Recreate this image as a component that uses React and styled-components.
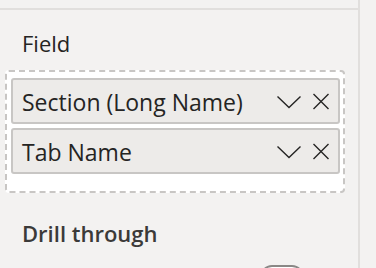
import React from 'react';
import styled, { createGlobalStyle } from 'styled-components';

const GlobalStyle = createGlobalStyle`
  html, body {
    margin: 0;
    padding: 0;
    background: #f3f2f1;
    overflow: hidden;
  }
  body {
    font-family: "Open Sans", "Noto Sans", "Liberation Sans", sans-serif;
    color: #252423;
  }
`;

const Layout = styled.div`
  display: flex;
  width: 376px;
  min-height: 268px;
`;

const Pane = styled.div`
  width: 358px;
  border-right: 2px solid #e1dfdd;
`;

const TopStrip = styled.div`
  height: 8px;
  border-bottom: 2px solid #e1dfdd;
`;

const Heading = styled.div`
  font-size: 22px;
  font-weight: ${(p) => (p.$bold ? 600 : 400)};
  line-height: 30px;
  padding-left: 22px;
  margin-top: ${(p) => p.$top}px;
  color: ${(p) => (p.$bold ? '#3b3a39' : '#252423')};
`;

const DropZone = styled.div`
  margin: 12px 0 0 5px;
  width: 340px;
  box-sizing: border-box;
  border: 2px dashed #c8c6c4;
  border-radius: 4px;
  background: #ffffff;
  padding: 6px 3px 17px 4px;
  display: flex;
  flex-direction: column;
  gap: 4px;
`;

const FieldWell = styled.div`
  height: 46px;
  box-sizing: border-box;
  border: 2px solid #c8c6c4;
  border-radius: 3px;
  background: #edebe9;
  display: flex;
  align-items: center;
  padding: 1px 8px 0 9px;
`;

const FieldName = styled.span`
  flex: 1;
  font-size: 23px;
  white-space: nowrap;
`;

const IconButton = styled.span`
  display: flex;
  align-items: center;
  justify-content: center;
  margin-left: ${(p) => p.$gap || 0}px;
`;

const ToggleRow = styled.div`
  display: flex;
  padding-left: 260px;
  margin-top: 17px;
`;

const Toggle = styled.div`
  width: 40px;
  height: 20px;
  border: 2px solid #8a8886;
  border-radius: 12px;
  background: #ffffff;
`;

const Chevron = () => (
  <svg width="26" height="14" viewBox="0 0 26 14" fill="none">
    <path d="M1.5 1.5 L13 12.5 L24.5 1.5" stroke="#252423" strokeWidth="1.4" />
  </svg>
);

const Cross = () => (
  <svg width="18" height="17" viewBox="0 0 18 17" fill="none">
    <path d="M1.5 1 L16.5 16 M16.5 1 L1.5 16" stroke="#252423" strokeWidth="1.4" />
  </svg>
);

const fields = ['Section (Long Name)', 'Tab Name'];

export default function App() {
  return (
    <>
      <GlobalStyle />
      <Layout>
        <Pane>
          <TopStrip />
          <Heading $top={18}>Field</Heading>
          <DropZone>
            {fields.map((name) => (
              <FieldWell key={name}>
                <FieldName>{name}</FieldName>
                <IconButton><Chevron /></IconButton>
                <IconButton $gap={10}><Cross /></IconButton>
              </FieldWell>
            ))}
          </DropZone>
          <Heading $bold $top={25}>Drill through</Heading>
          <ToggleRow>
            <Toggle />
          </ToggleRow>
        </Pane>
      </Layout>
    </>
  );
}
